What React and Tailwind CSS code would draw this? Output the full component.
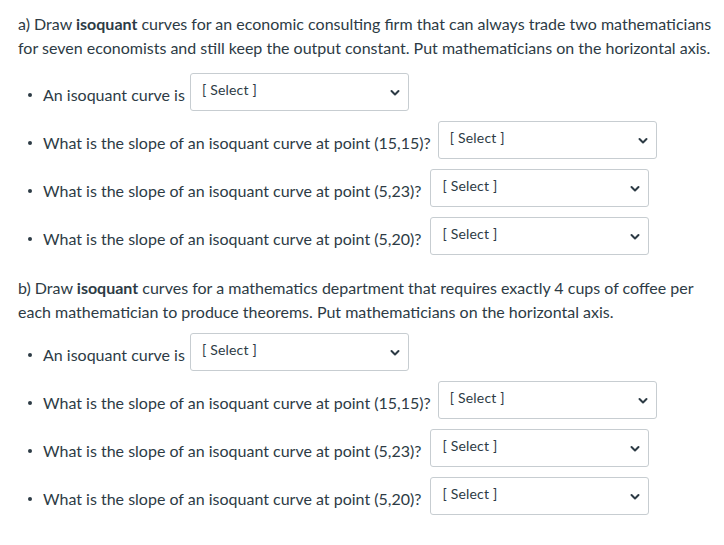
import React from "react";

const SelectBox = () => (
    <div className="relative w-[219px] h-[38px] border border-[#c7cdd1] rounded-[3px] bg-white shrink-0">
        <span className="absolute left-[11px] top-[7px] text-[14px] leading-[18px] text-[#2d3b45] tracking-[0.2px]">[ Select ]</span>
        <svg className="absolute right-[8px] top-[15px] w-[10px] h-[8px]" viewBox="0 0 10 8">
            <path d="M1.5 2l3.5 3.5L8.5 2" fill="none" stroke="#2d3b45" strokeWidth="2" strokeLinecap="round" strokeLinejoin="round" />
        </svg>
    </div>
);

const Item = ({ text, gap }) => (
    <li className="flex items-center h-[38px] mb-[10px]">
        <span className="w-[25px] flex justify-start pl-[10px] pt-[6px]">
            <span className="w-[4px] h-[4px] rounded-full bg-[#2d3b45]"></span>
        </span>
        <span className={`pt-[6px] whitespace-nowrap ${gap}`}>{text}</span>
        <SelectBox />
    </li>
);

const questions = [
    { text: "An isoquant curve is", gap: "mr-[5px]" },
    { text: "What is the slope of an isoquant curve at point (15,15)?", gap: "mr-[7px]" },
    { text: "What is the slope of an isoquant curve at point (5,23)?", gap: "mr-[9px]" },
    { text: "What is the slope of an isoquant curve at point (5,20)?", gap: "mr-[9px]" },
];

export default function App() {
    return (
        <div className="bg-white w-[724px] h-[545px] pl-[18px] pr-[6px] pt-[12px] text-[#2d3b45] text-[16px] leading-[24px]" style={{ fontFamily: "Lato, 'Noto Sans', sans-serif" }}>
            <p className="mb-[13px]">
                a) Draw <strong>isoquant</strong> curves for an economic consulting firm that can always trade two mathematicians for seven economists and still keep the output constant. Put mathematicians on the horizontal axis.
            </p>
            <ul>
                {questions.map((q) => <Item key={"a" + q.text} text={q.text} gap={q.gap} />)}
            </ul>
            <p className="mt-[21px] mb-[9px] w-[690px]">
                b) Draw <strong>isoquant</strong> curves for a mathematics department that requires exactly 4 cups of coffee per each mathematician to produce theorems. Put mathematicians on the horizontal axis.
            </p>
            <ul>
                {questions.map((q) => <Item key={"b" + q.text} text={q.text} gap={q.gap} />)}
            </ul>
        </div>
    );
}
